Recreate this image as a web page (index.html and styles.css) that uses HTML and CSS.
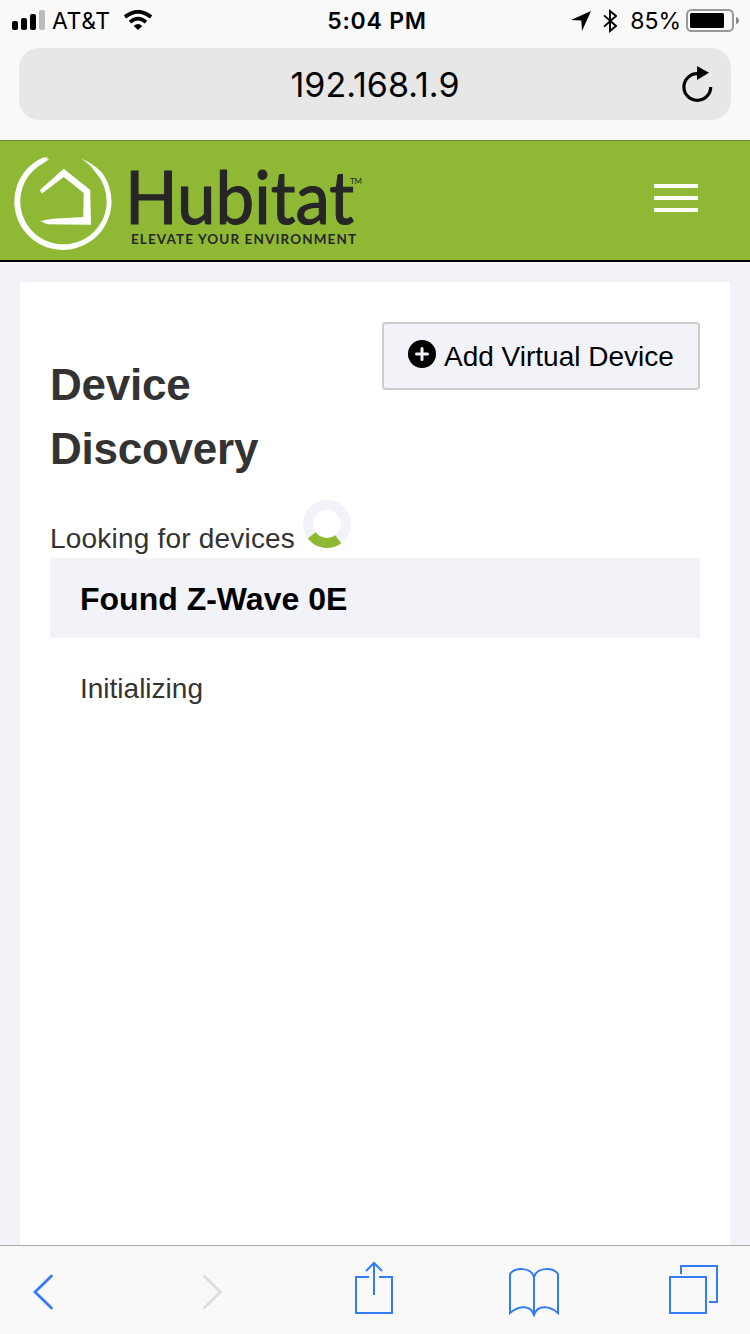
FILE: index.html
```html
<!DOCTYPE html>
<html lang="en">
	<head>
		<meta charset="utf-8" />
		<meta name="viewport" content="width=device-width, initial-scale=1" />
		<title>Device Discovery</title>
		<link rel="stylesheet" href="styles.css">
	</head>

	<body>
		<div class="browser-top">
			<div class="status">
				<div class="status-left">
					<svg width="34" height="20" viewBox="0 0 34 20">
						<rect x="0" y="11" width="6" height="9" rx="2" />
						<rect x="9" y="8" width="6" height="12" rx="2" />
						<rect x="18" y="4" width="6" height="16" rx="2" />
						<rect x="27" y="0" width="6" height="20" rx="2" fill="#bbb" />
					</svg>
					<span class="carrier">AT&amp;T</span>
					<svg class="wifi" width="28" height="20" viewBox="0 0 28 20">
						<path d="M1 7Q14 -3.4 27 7" fill="none" stroke="#000" stroke-width="3.8" />
						<path d="M6 12.2Q14 5 22 12.2" fill="none" stroke="#000" stroke-width="3.6" />
						<path d="M9.7 16Q14 12 18.3 16L14 20z" />
					</svg>
				</div>
				<div class="time">5:04 PM</div>
				<div class="status-right">
					<svg width="20" height="20" viewBox="0 0 20 20">
						<path d="M20 0L11 20L10.3 9.4L0 9z" />
					</svg>
					<svg class="bluetooth" width="14" height="24" viewBox="0 0 14 24">
						<path d="M1 6.4L13 17L7 22V2L13 7L1 17.6" fill="none" stroke="#000" stroke-width="1.9" />
					</svg>
					<span class="percent">85%</span>
					<svg class="battery" width="53" height="24" viewBox="0 0 53 24">
						<rect x="1" y="1" width="46" height="21" rx="4.5" fill="none" stroke="#999" stroke-width="2" />
						<rect x="4" y="4" width="34" height="15" rx="1.5" />
						<path d="M50 8Q53 9 53 11.5T50 15z" fill="#888" />
					</svg>
				</div>
			</div>
			<div class="address">
				<span class="url">192.168.1.9</span>
				<svg class="reload" width="32" height="36" viewBox="0 0 32 36">
					<path d="M28.7 21A13.4 13.4 0 1 1 15.3 7.6" fill="none" stroke="#000" stroke-width="3.2" />
					<path d="M15 0L27 6.8L15 14z" />
				</svg>
			</div>
		</div>

		<header>
			<svg class="logo" width="380" height="119" viewBox="0 141 380 119">
				<path fill="#fff" d="M43 157.4A48.6 48.4 0 1 0 101 171.5Q92 163 81 158.6Q90 164 95.5 172.5A43.2 43 0 1 1 43 163.5L49.5 159L46 159.4L48.5 157.4z" />
				<path fill="#fff" d="M63.7 168.7L90.2 190L91 224.7L47.3 224.3L40.3 221.3Q52 218 61.7 218.3L83.3 217L83.7 193L63.7 177L41.7 193.7L40 190z" />
				<text class="brand" x="125" y="223.5" textLength="229" lengthAdjust="spacingAndGlyphs">Hubitat</text>
				<text class="tm" x="350" y="184" textLength="12">TM</text>
				<text class="tagline" x="131" y="244" textLength="225">ELEVATE YOUR ENVIRONMENT</text>
			</svg>
			<div class="menu">
				<i></i>
				<i></i>
				<i></i>
			</div>
		</header>

		<main>
			<section class="content">
				<button class="add">
					<svg width="28" height="28" viewBox="0 0 28 28">
						<circle cx="14" cy="14" r="14" />
						<path d="M14 8.5V19.5M8.5 14H19.5" stroke="#f2f3f8" stroke-width="3" stroke-linecap="round" />
					</svg>
					<span>Add Virtual Device</span>
				</button>
				<h1>Device Discovery</h1>
				<div class="looking">
					<span>Looking for devices</span>
					<svg class="spinner" width="48" height="48" viewBox="0 0 48 48">
						<circle cx="24" cy="24" r="19" fill="none" stroke="#f2f3f8" stroke-width="10" />
						<path d="M8.7 35.3A19 19 0 0 0 35.2 39.3" fill="none" stroke="#8fb935" stroke-width="10" />
					</svg>
				</div>
				<h2>Found Z-Wave 0E</h2>
				<p>Initializing</p>
			</section>
		</main>

		<footer>
			<svg width="22" height="36" viewBox="0 0 22 36">
				<path d="M19.5 2L3 18L19.5 34" stroke="#347cf6" stroke-width="2.8" stroke-linecap="round" />
			</svg>
			<svg width="22" height="36" viewBox="0 0 22 36">
				<path d="M2 2L18.5 18L2 34" stroke="#dcdcdc" stroke-width="2.5" stroke-linecap="round" />
			</svg>
			<svg class="share" width="40" height="54" viewBox="0 0 40 54">
				<path d="M15 16H2V52H38V16H25M20 34V2M12 10L20 2L28 10" stroke="#347cf6" stroke-width="2" />
			</svg>
			<svg class="book" width="52" height="50" viewBox="0 0 52 50">
				<path d="M26 10C23 0 7 0 2 7V46C11 38 23 38 26 48C29 38 41 38 50 46V7C45 0 29 0 26 10V48" stroke="#347cf6" stroke-width="2" />
			</svg>
			<svg class="tabs" width="52" height="52" viewBox="0 0 52 52">
				<path d="M2 14H38V50H2zM13 11V3H49V39H41" stroke="#347cf6" stroke-width="2" />
			</svg>
		</footer>
	</body>
</html>
```
FILE: styles.css
```css
* {
	box-sizing: border-box;
}

body {
	background: #f2f3f8;
	font-family: "Liberation Sans", Arial, sans-serif;
	font-size: 28px;
	color: #333;
	margin: 0;
	height: 1334px;
	display: flex;
	flex-direction: column;
	overflow: hidden;
}

svg {
	display: block;
	flex: none;
}

.browser-top {
	background: #f9f9f9;
	color: #000;
	height: 141px;
	border-bottom: 1px solid #6f8f32;
	font-family: Inter, sans-serif;
}

.status {
	display: grid;
	grid-template-columns: 1fr auto 1fr;
	align-items: center;
	height: 40px;
	padding: 2px 11px 0 12px;
	font-size: 23px;
}

.status-left,
.status-right {
	display: flex;
	align-items: center;
}

.status-left svg {
	margin-bottom: 2px;
}

.status-right {
	justify-content: flex-end;
}

.carrier {
	margin-left: 6px;
	letter-spacing: 0.6px;
}

.wifi {
	margin-left: 13px;
}

.time {
	padding-left: 3px;
	font-weight: 600;
	letter-spacing: 0.8px;
}

.bluetooth {
	margin: 0 13px 0 12px;
}

.percent {
	margin-right: 5px;
}

.battery {
	margin-bottom: 1px;
}

.address {
	display: flex;
	align-items: center;
	justify-content: center;
	height: 72px;
	margin: 8px 19px 0;
	padding-left: 49px;
	background: #e7e7e7;
	border-radius: 20px;
	font-size: 34px;
}

.url {
	flex: 1;
	text-align: center;
}

.reload {
	margin-right: 17px;
}

header {
	display: flex;
	justify-content: space-between;
	align-items: center;
	height: 121px;
	background: #8fb935;
	border-bottom: 2px solid #000;
}

.brand {
	font: 74px Lato, sans-serif;
	fill: #262626;
	stroke: #262626;
	stroke-width: 1.2;
}

.tm {
	font: 8px Lato, sans-serif;
	fill: #262626;
}

.tagline {
	font: bold 13.5px Lato, sans-serif;
	fill: #262626;
}

.menu {
	display: grid;
	gap: 8px;
	width: 44px;
	margin: 0 52px 5px 0;
}

.menu i {
	height: 4px;
	background: #fff;
	border-radius: 1px;
}

main {
	flex: 1;
	padding: 20px 20px 0;
}

.content {
	display: flow-root;
	height: 100%;
	background: #fff;
	padding: 40px 30px 0;
}

.add {
	float: right;
	display: flex;
	align-items: center;
	gap: 8px;
	width: 318px;
	height: 68px;
	padding: 0 0 0 24px;
	background: #f2f3f8;
	border: 2px solid #ccc;
	border-radius: 4px;
	font: inherit;
	color: #000;
	white-space: nowrap;
}

.add svg {
	margin-bottom: 4px;
}

.add span {
	padding-top: 2px;
}

h1 {
	margin: 31px 0 0;
	font-size: 44px;
	line-height: 64px;
	letter-spacing: -0.25px;
}

.looking {
	display: flex;
	align-items: flex-end;
	gap: 8px;
	height: 77px;
	line-height: 38px;
	letter-spacing: 0.2px;
}

.spinner {
	margin-bottom: 10px;
}

h2 {
	margin: 0;
	padding: 2px 30px 0;
	background: #f2f3f8;
	color: #000;
	font-size: 32px;
	line-height: 78px;
	height: 80px;
}

p {
	margin: 31px 30px 0;
	line-height: 40px;
}

footer {
	display: grid;
	grid-template-columns: 170px 152px 154px 160px 52px;
	align-items: center;
	height: 89px;
	padding: 4px 0 0 32px;
	background: #f9f9f9;
	border-top: 1px solid #aaa;
	fill: none;
}

.share {
	margin-bottom: 8px;
}

.tabs {
	margin-bottom: 6px;
}
```
